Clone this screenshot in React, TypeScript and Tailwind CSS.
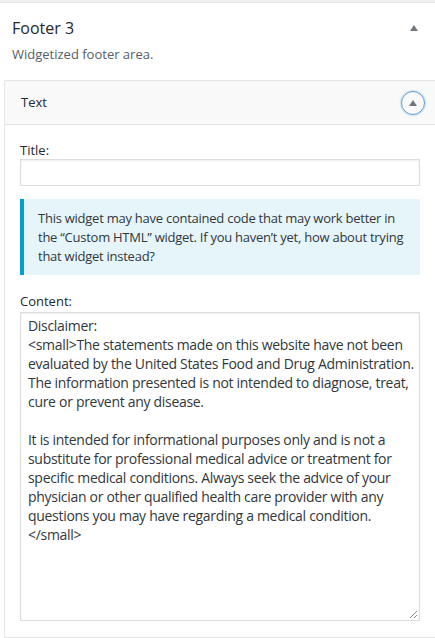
const font = "font-['Segoe_UI','Open_Sans','Noto_Sans',sans-serif]"

const lines = [
  'Disclaimer:',
  '<small>The statements made on this website have not been',
  'evaluated by the United States Food and Drug Administration.',
  'The information presented is not intended to diagnose, treat,',
  'cure or prevent any disease.',
  '',
  'It is intended for informational purposes only and is not a',
  'substitute for professional medical advice or treatment for',
  'specific medical conditions. Always seek the advice of your',
  'physician or other qualified health care provider with any',
  'questions you may have regarding a medical condition.',
  '</small>',
]

const notice = [
  'This widget may have contained code that may work better in',
  'the “Custom HTML” widget. If you haven’t yet, how about trying',
  'that widget instead?',
]

function Arrow() {
  return <span className="w-0 h-0 border-l-[4px] border-r-[4px] border-b-[6px] border-l-transparent border-r-transparent border-b-[#72777c]" />
}

export default function App() {
  return (
    <div className={`w-[435px] h-[638px] overflow-hidden bg-white text-[#23282d] ${font}`}>
      <div className="h-[3px] bg-[#f1f1f1] border-b border-[#e5e5e5]" />

      <div className="flex items-center justify-between pl-3 pr-[17px] pt-[14px]">
        <h2 className="text-[16px] leading-[22px] text-[#23282d]">Footer 3</h2>
        <Arrow />
      </div>
      <p className="pl-3 mt-[6px] text-[13px] leading-[18px] text-[#555d66]">Widgetized footer area.</p>

      <div className="ml-1 mt-[17px] border border-r-0 border-[#e5e5e5]">
        <div className="flex items-center justify-between h-[44px] bg-[#f9f9f9] border-b border-[#e5e5e5] pl-[16px] pr-[10px]">
          <span className="text-[13px] text-[#23282d]">Text</span>
          <span className="flex items-center justify-center w-[24px] h-[24px] rounded-full border border-[#5b9dd9] shadow-[0_0_2px_rgba(30,140,190,0.6)]">
            <Arrow />
          </span>
        </div>

        <div className="pl-[15px] pr-[15px] pt-[17px] pb-4">
          <label className="block text-[13px] leading-[17px] text-[#23282d]">Title:</label>
          <div className="w-[400px] h-[27px] border border-[#ddd] shadow-[inset_0_1px_2px_rgba(0,0,0,0.07)]" />

          <div className="mt-[13px] w-[400px] bg-[#e5f5fa] border-l-[4px] border-[#00a0d2] pl-[14px] pr-2 pt-[10px] pb-[9px] text-[13px] leading-[19px] text-[#32373c] tracking-[-0.25px]">
            {notice.map((l, i) => (
              <div key={i} className="whitespace-nowrap">{l}</div>
            ))}
          </div>

          <label className="block mt-[18px] text-[13px] leading-[17px] text-[#23282d]">Content:</label>
          <div className="relative mt-[2px] w-[400px] h-[309px] border border-[#ddd] shadow-[inset_0_1px_2px_rgba(0,0,0,0.07)] pl-[7px] pr-2 pt-[3px]">
            <div className="text-[14px] leading-[19px] text-[#32373c] tracking-[-0.3px]">
              {lines.map((l, i) => (
                <div key={i} className="whitespace-pre h-[19px]">{l}</div>
              ))}
            </div>
            <svg className="absolute right-[1px] bottom-[1px]" width="9" height="9" viewBox="0 0 9 9">
              <line x1="1" y1="8" x2="8" y2="1" stroke="#888" strokeWidth="1" />
              <line x1="5" y1="8" x2="8" y2="5" stroke="#888" strokeWidth="1" />
            </svg>
          </div>
        </div>
      </div>
    </div>
  )
}
